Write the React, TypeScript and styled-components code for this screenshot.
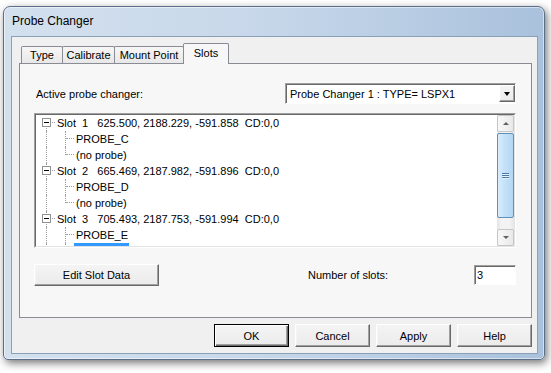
import React from "react";
import styled, { createGlobalStyle, css } from "styled-components";

const GlobalStyle = createGlobalStyle`
  html, body {
    margin: 0;
    padding: 0;
    background: #ffffff;
  }
  body {
    font-family: "Liberation Sans", Arial, sans-serif;
    font-size: 11px;
    color: #000000;
  }
`;

const sunken = css`
  box-sizing: border-box;
  border: 1px solid;
  border-color: #a0a0a0 #ffffff #ffffff #a0a0a0;
  background: #ffffff;
`;

const raised = css`
  box-sizing: border-box;
  border: 1px solid;
  border-color: #ffffff #696969 #696969 #ffffff;
  box-shadow: inset -1px -1px #a0a0a0, inset 1px 1px #f4f4f4;
  background: linear-gradient(#f4f4f4, #ebebeb);
`;

const Desktop = styled.div`
  width: 551px;
  height: 373px;
  box-sizing: border-box;
  padding: 6px 0 0 3px;
  overflow: hidden;
`;

const Window = styled.div`
  width: 542px;
  height: 354px;
  box-sizing: border-box;
  display: flex;
  flex-direction: column;
  padding: 0 6px 5px 7px;
  border: 1px solid #5b6f88;
  border-radius: 7px 7px 5px 5px;
  background: linear-gradient(to right, #d3e0ee 0%, #c8d8ea 45%, #b5cae2 80%, #a9c1dc 100%);
  box-shadow: inset 0 0 0 1px rgba(255, 255, 255, 0.5), 2px 3px 8px rgba(0, 0, 0, 0.55);
`;

const TitleBar = styled.div`
  height: 29px;
  display: flex;
  align-items: center;
  padding: 0 0 2px 1px;
  box-sizing: border-box;
  font-size: 12px;
  color: #000;
`;

const Client = styled.div`
  flex: 1;
  display: flex;
  flex-direction: column;
  padding: 6px 5px 6px 7px;
  border: 1px solid #8a9fb8;
  background: #f0f0f0;
`;

const TabStrip = styled.div`
  display: flex;
  align-items: flex-end;
  height: 21px;
  margin: 0 0 -1px 2px;
  position: relative;
  z-index: 1;
`;

const Tab = styled.div<{ $active?: boolean; $w: number }>`
  width: ${(p) => p.$w}px;
  height: ${(p) => (p.$active ? 21 : 17)}px;
  margin-bottom: ${(p) => (p.$active ? 0 : 1)}px;
  box-sizing: border-box;
  display: flex;
  align-items: center;
  justify-content: center;
  padding-bottom: ${(p) => (p.$active ? 3 : 0)}px;
  border: 1px solid #898c95;
  border-bottom: none;
  border-radius: 2px 2px 0 0;
  background: ${(p) => (p.$active ? "#f7f7f7" : "linear-gradient(#f6f6f6, #e8e8e8)")};
  & + & {
    margin-left: -1px;
  }
`;

const TabPanel = styled.div`
  height: 255px;
  box-sizing: border-box;
  display: flex;
  flex-direction: column;
  padding: 19px 15px 0 14px;
  border: 1px solid #898c95;
  background: #f7f7f7;
`;

const ComboRow = styled.div`
  height: 21px;
  display: flex;
  align-items: center;
  justify-content: space-between;
`;

const FieldLabel = styled.span`
  padding-left: 2px;
`;

const Combo = styled.div`
  ${sunken};
  width: 231px;
  height: 21px;
  display: flex;
  align-items: center;
  padding-left: 2px;
  box-shadow: inset 1px 1px #696969;
`;

const ComboText = styled.span`
  flex: 1;
  padding-left: 2px;
`;

const DropButton = styled.div`
  ${raised};
  width: 16px;
  height: 17px;
  display: flex;
  align-items: center;
  justify-content: center;
  &::after {
    content: "";
    border-left: 3.5px solid transparent;
    border-right: 3.5px solid transparent;
    border-top: 4px solid #000;
  }
`;

const TreeFrame = styled.div`
  ${sunken};
  margin-top: 9px;
  height: 135px;
  display: flex;
`;

const TreeWell = styled.div`
  flex: 1;
  display: flex;
  overflow: hidden;
  border: 1px solid;
  border-color: #696969 #e3e3e3 #e3e3e3 #696969;
`;

const TreeContent = styled.div`
  flex: 1;
  overflow: hidden;
`;

const TreeRow = styled.div`
  height: 16px;
  display: flex;
  white-space: pre;
`;

type LineKind = "full" | "upper" | "lower";

const Gutter = styled.div<{ $line: LineKind; $branch?: boolean }>`
  position: relative;
  flex: none;
  width: 19px;
  display: flex;
  align-items: flex-start;
  padding: 3px 0 0 6px;
  box-sizing: border-box;
  &::before {
    content: "";
    position: absolute;
    left: 10px;
    top: ${(p) => (p.$line === "lower" ? "8px" : "0")};
    height: ${(p) => (p.$line === "upper" ? "8px" : "auto")};
    bottom: ${(p) => (p.$line === "upper" ? "auto" : "0")};
    border-left: 1px dotted #a0a0a0;
  }
  ${(p) =>
    p.$branch &&
    css`
      &::after {
        content: "";
        position: absolute;
        left: 11px;
        top: 7px;
        width: 8px;
        border-top: 1px dotted #a0a0a0;
      }
    `}
`;

const Expander = styled.div`
  position: relative;
  z-index: 1;
  width: 9px;
  height: 9px;
  box-sizing: border-box;
  border: 1px solid #919191;
  background: #ffffff;
  &::after {
    content: "";
    position: absolute;
    left: 1px;
    top: 3px;
    width: 5px;
    height: 1px;
    background: #000;
  }
`;

const NodeLabel = styled.span<{ $selected?: boolean }>`
  display: flex;
  align-items: center;
  padding: 0 2px;
  height: 16px;
  background: ${(p) => (p.$selected ? "#3399ff" : "transparent")};
  color: ${(p) => (p.$selected ? "#ffffff" : "#000000")};
`;

const Scrollbar = styled.div`
  width: 17px;
  flex: none;
  display: flex;
  flex-direction: column;
  background: linear-gradient(to right, #e3e3e3, #f3f3f3 25%, #f3f3f3 75%, #e6e6e6);
`;

const ScrollButton = styled.div<{ $down?: boolean }>`
  height: 17px;
  box-sizing: border-box;
  margin-top: ${(p) => (p.$down ? "auto" : "0")};
  display: flex;
  align-items: center;
  justify-content: center;
  border: 1px solid #c6c6c6;
  border-radius: 2px;
  background: linear-gradient(to right, #f8f8f8, #e9e9e9);
  &::after {
    content: "";
    border-left: 3px solid transparent;
    border-right: 3px solid transparent;
    ${(p) =>
      p.$down ? "border-top: 3px solid #606060;" : "border-bottom: 3px solid #606060;"}
  }
`;

const ScrollThumb = styled.div`
  margin-top: 1px;
  height: 85px;
  box-sizing: border-box;
  display: flex;
  flex-direction: column;
  align-items: center;
  justify-content: center;
  gap: 1px;
  border: 1px solid #5f8fbb;
  border-radius: 2px;
  background: linear-gradient(to right, #d9ecfb, #c2e0f8 50%, #b3d7f4);
`;

const Grip = styled.div`
  width: 7px;
  height: 1px;
  background: #4a7aa6;
  box-shadow: 0 1px #e8f4fd;
`;

const SlotRow = styled.div`
  margin-top: 16px;
  height: 22px;
  display: flex;
  align-items: center;
`;

const PushButton = styled.div<{ $w: number; $h?: number; $default?: boolean }>`
  ${raised};
  width: ${(p) => p.$w}px;
  height: ${(p) => p.$h ?? 22}px;
  display: flex;
  align-items: center;
  justify-content: center;
  ${(p) =>
    p.$default &&
    css`
      border-color: #000;
      box-shadow: inset 1px 1px #ffffff, inset -1px -1px #696969, inset -2px -2px #a0a0a0;
    `}
`;

const CountGroup = styled.div`
  margin-left: auto;
  width: 208px;
  display: flex;
  align-items: center;
  justify-content: space-between;
`;

const NumberBox = styled.div`
  ${sunken};
  width: 42px;
  height: 20px;
  display: flex;
  align-items: center;
  padding-left: 2px;
  box-shadow: inset 1px 1px #696969;
`;

const ButtonBar = styled.div`
  margin-top: 6px;
  display: flex;
  justify-content: flex-end;
  gap: 6px;
`;

const tabs = [
  { label: "Type", w: 42 },
  { label: "Calibrate", w: 53 },
  { label: "Mount Point", w: 70 },
  { label: "Slots", w: 46, active: true },
];

const slots = [
  { n: 1, pos: "625.500, 2188.229, -591.858", probes: ["PROBE_C", "(no probe)"] },
  { n: 2, pos: "665.469, 2187.982, -591.896", probes: ["PROBE_D", "(no probe)"] },
  { n: 3, pos: "705.493, 2187.753, -591.994", probes: ["PROBE_E", "(no probe)"] },
];

const SlotTree: React.FC = () => (
  <TreeContent>
    {slots.map((slot, i) => (
      <React.Fragment key={slot.n}>
        <TreeRow>
          <Gutter $line={i === 0 ? "lower" : "full"} $branch>
            <Expander />
          </Gutter>
          <NodeLabel>{`Slot  ${slot.n}   ${slot.pos}  CD:0,0`}</NodeLabel>
        </TreeRow>
        {slot.probes.map((probe, j) => (
          <TreeRow key={j}>
            <Gutter $line="full" />
            <Gutter $line={j === slot.probes.length - 1 ? "upper" : "full"} $branch />
            <NodeLabel $selected={i === 2 && j === 1}>{probe}</NodeLabel>
          </TreeRow>
        ))}
      </React.Fragment>
    ))}
  </TreeContent>
);

export default function App() {
  return (
    <>
      <GlobalStyle />
      <Desktop>
        <Window>
          <TitleBar>Probe Changer</TitleBar>
          <Client>
            <TabStrip>
              {tabs.map((t) => (
                <Tab key={t.label} $w={t.w} $active={t.active}>
                  {t.label}
                </Tab>
              ))}
            </TabStrip>
            <TabPanel>
              <ComboRow>
                <FieldLabel>Active probe changer:</FieldLabel>
                <Combo>
                  <ComboText>Probe Changer 1 : TYPE= LSPX1</ComboText>
                  <DropButton />
                </Combo>
              </ComboRow>
              <TreeFrame>
                <TreeWell>
                  <SlotTree />
                  <Scrollbar>
                    <ScrollButton />
                    <ScrollThumb>
                      <Grip />
                      <Grip />
                      <Grip />
                    </ScrollThumb>
                    <ScrollButton $down />
                  </Scrollbar>
                </TreeWell>
              </TreeFrame>
              <SlotRow>
                <PushButton $w={125}>Edit Slot Data</PushButton>
                <CountGroup>
                  <span>Number of slots:</span>
                  <NumberBox>3</NumberBox>
                </CountGroup>
              </SlotRow>
            </TabPanel>
            <ButtonBar>
              <PushButton $w={75} $h={23} $default>
                OK
              </PushButton>
              <PushButton $w={75} $h={23}>
                Cancel
              </PushButton>
              <PushButton $w={75} $h={23}>
                Apply
              </PushButton>
              <PushButton $w={75} $h={23}>
                Help
              </PushButton>
            </ButtonBar>
          </Client>
        </Window>
      </Desktop>
    </>
  );
}
